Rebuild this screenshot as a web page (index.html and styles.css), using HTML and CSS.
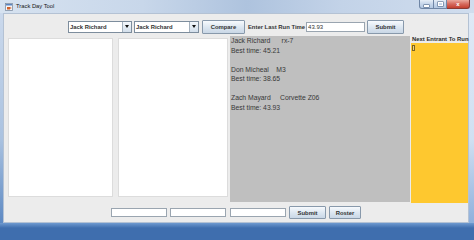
FILE: index.html
```html
<!DOCTYPE html>
<html>
<head>
<meta charset="utf-8">
<title>Track Day Tool</title>
<link rel="stylesheet" href="styles.css">
</head>
<body>
<div class="window">
  <div class="titlebar">
    <svg class="app-icon" width="8" height="8" viewBox="0 0 8 8">
      <rect x="0.5" y="0.5" width="7" height="7" fill="#f4f6f9" stroke="#7f8fa3" stroke-width="0.8"/>
      <rect x="1" y="1" width="6" height="1.5" fill="#5a84bf"/>
      <path d="M2 4h3v2.5H2z" fill="#d1622b"/>
      <path d="M5 4.4h1v1.2H5" fill="none" stroke="#d1622b" stroke-width="0.6"/>
    </svg>
    <span class="title">Track Day Tool</span>
    <div class="caption">
      <span class="cap cap-min"><span class="glyph-min"></span></span>
      <span class="cap cap-max"><span class="glyph-max"></span></span>
      <span class="cap cap-close">x</span>
    </div>
  </div>
  <div class="frame">
    <div class="edge-left"></div>
    <div class="client">
      <div class="toprow">
        <div class="combo combo-a"><span class="combo-text">Jack Richard</span><span class="combo-arrow"></span></div>
        <div class="combo combo-b"><span class="combo-text">Jack Richard</span><span class="combo-arrow"></span></div>
        <button class="btn btn-compare">Compare</button>
        <span class="run-label">Enter Last Run Time</span>
        <input class="field field-run" type="text" value="43.93">
        <button class="btn btn-submit-top">Submit</button>
      </div>
      <div class="main">
        <div class="list list-a"></div>
        <div class="list list-b"></div>
        <div class="results">Jack Richard      rx-7
Best time: 45.21

Don Micheal    M3
Best time: 38.65

Zach Mayard     Corvette Z06
Best time: 43.93</div>
        <div class="side">
          <div class="side-label">Next Entrant To Run</div>
          <div class="yellow"><div class="tiny-field"></div></div>
        </div>
      </div>
      <div class="bottomrow">
        <input class="field field-b1" type="text">
        <input class="field field-b2" type="text">
        <input class="field field-b3" type="text">
        <button class="btn btn-submit">Submit</button>
        <button class="btn btn-roster">Roster</button>
      </div>
    </div>
    <div class="edge-right"></div>
  </div>
  <div class="edge-bottom"></div>
</div>
</body>
</html>
```

FILE: styles.css
```css
html, body {
  margin: 0;
  padding: 0;
}
body {
  width: 474px;
  height: 228px;
  overflow: hidden;
  font-family: "Liberation Sans", Arial, sans-serif;
  background: #3f6eae;
}
.window {
  width: 474px;
  height: 228px;
  display: flex;
  flex-direction: column;
}
.titlebar {
  height: 13px;
  flex: none;
  display: flex;
  align-items: flex-start;
  background: linear-gradient(to right, #d6e2f0 0%, #c8d7ea 30%, #aec3de 52%, #c3d3e8 72%, #d0ddee 100%);
}
.app-icon {
  flex: none;
  margin: 3px 0 0 5px;
}
.title {
  margin: 2px 0 0 3px;
  font-size: 5.8px;
  line-height: 9px;
  color: #141414;
  white-space: nowrap;
}
.caption {
  margin-left: auto;
  margin-right: 4px;
  display: flex;
  height: 9px;
}
.cap {
  height: 9px;
  box-sizing: border-box;
  display: flex;
  align-items: center;
  justify-content: center;
  border: 1px solid #6f86a6;
  border-top: none;
  background: linear-gradient(#e6eef7, #c6d6eb 50%, #b2c7e1);
}
.cap-min {
  width: 15px;
  border-radius: 0 0 0 3px;
}
.cap-max {
  width: 13px;
  border-left: none;
}
.cap-close {
  width: 23px;
  border-left: none;
  border-radius: 0 0 3px 0;
  border-color: #8a3a33;
  background: linear-gradient(#eaa89d, #d66a5d 50%, #c4402f);
  color: #fff;
  font-size: 6px;
  font-weight: bold;
  line-height: 8px;
}
.glyph-min {
  width: 5px;
  height: 2px;
  margin-top: 3px;
  background: #fff;
  box-shadow: 0 0 0 0.5px #40587a;
}
.glyph-max {
  width: 5px;
  height: 4px;
  box-sizing: border-box;
  border: 1px solid #fff;
  box-shadow: 0 0 0 0.5px #40587a;
}
.frame {
  height: 210px;
  flex: none;
  display: flex;
}
.edge-left {
  width: 3px;
  background: linear-gradient(#cbd9ec, #aac2e0 60%, #5d89c3);
}
.edge-right {
  width: 5px;
  background: linear-gradient(#dfe9f6, #d0e0f2 60%, #8fb0dc);
}
.edge-bottom {
  height: 5px;
  flex: none;
  background: linear-gradient(#6f9ad0, #3f6eae);
}
.client {
  width: 466px;
  height: 210px;
  background: #ececec;
  box-shadow: inset 0 0 0 1px #b4c2d4;
  display: flex;
  flex-direction: column;
}
.toprow {
  height: 23px;
  box-sizing: border-box;
  padding-top: 4px;
  display: flex;
  justify-content: center;
  align-items: center;
  flex: none;
}
.combo {
  height: 12px;
  box-sizing: border-box;
  border: 1px solid #7d8d9d;
  background: #fff;
  display: flex;
  align-items: center;
}
.combo-a {
  width: 64px;
  margin-right: 2px;
}
.combo-b {
  width: 65px;
  margin-right: 3px;
}
.combo-text {
  flex: 1;
  padding-left: 1px;
  font-size: 5.9px;
  font-weight: bold;
  color: #333;
  white-space: nowrap;
}
.combo-arrow {
  width: 9px;
  height: 100%;
  box-sizing: border-box;
  border-left: 1px solid #a3b0bd;
  background: linear-gradient(#f3f7fb, #d3dfeb);
  display: flex;
  align-items: center;
  justify-content: center;
}
.combo-arrow::before {
  content: "";
  border-left: 2.5px solid transparent;
  border-right: 2.5px solid transparent;
  border-top: 3px solid #111;
}
.btn {
  -webkit-appearance: none;
  appearance: none;
  margin: 0;
  padding: 0;
  height: 14px;
  box-sizing: border-box;
  border: 1px solid #8899ab;
  border-radius: 1px;
  background: linear-gradient(#f7fafd, #dde7f1 50%, #c9d7e6);
  font-family: "Liberation Sans", Arial, sans-serif;
  font-size: 5.9px;
  font-weight: bold;
  color: #333;
  line-height: 12px;
  text-align: center;
  white-space: nowrap;
}
.btn-compare {
  width: 43px;
  margin-right: 3px;
}
.run-label {
  margin-right: 1px;
  font-size: 5.9px;
  font-weight: bold;
  color: #333;
  white-space: nowrap;
}
.btn-submit-top {
  width: 37px;
  margin-left: 2px;
}
.field {
  margin: 0;
  padding: 0 1px;
  box-sizing: border-box;
  border: 1px solid #9aa5b0;
  background: #fff;
  font-family: "Liberation Sans", Arial, sans-serif;
  font-size: 6px;
  color: #333;
  outline: none;
}
.field-run {
  width: 59px;
  height: 10px;
}
.main {
  height: 167px;
  flex: none;
  display: flex;
  align-items: flex-start;
}
.list {
  margin-top: 2px;
  height: 159px;
  box-sizing: border-box;
  background: #fff;
  border: 1px solid #dcdcdc;
}
.list-a {
  margin-left: 5px;
  width: 105px;
}
.list-b {
  margin-left: 5px;
  width: 110px;
}
.results {
  margin-left: 2px;
  width: 180px;
  height: 166px;
  box-sizing: border-box;
  padding-left: 1px;
  background: #bfbfbf;
  font-size: 6.8px;
  line-height: 9.5px;
  color: #383838;
  white-space: pre;
}
.side {
  margin-left: 1px;
  width: 57px;
  display: flex;
  flex-direction: column;
}
.side-label {
  height: 7px;
  line-height: 7px;
  padding-left: 1px;
  font-size: 5.9px;
  font-weight: bold;
  color: #2a2a2a;
  white-space: nowrap;
}
.yellow {
  height: 160px;
  background: #fec82f;
  display: flex;
  align-items: flex-start;
}
.tiny-field {
  width: 3px;
  height: 6px;
  margin: 2px 0 0 1px;
  box-sizing: border-box;
  border: 1px solid #7a6324;
  background: #f3d67c;
}
.bottomrow {
  margin-top: 3px;
  height: 13px;
  flex: none;
  display: flex;
  justify-content: center;
  align-items: center;
}
.field-b1,
.field-b2,
.field-b3 {
  width: 56px;
  height: 9px;
}
.field-b1 {
  margin-right: 3px;
}
.field-b2 {
  margin-right: 4px;
}
.field-b3 {
  margin-right: 3px;
}
.btn-submit {
  width: 37px;
  height: 13px;
  margin-right: 3px;
}
.btn-roster {
  width: 32px;
  height: 13px;
}
```
